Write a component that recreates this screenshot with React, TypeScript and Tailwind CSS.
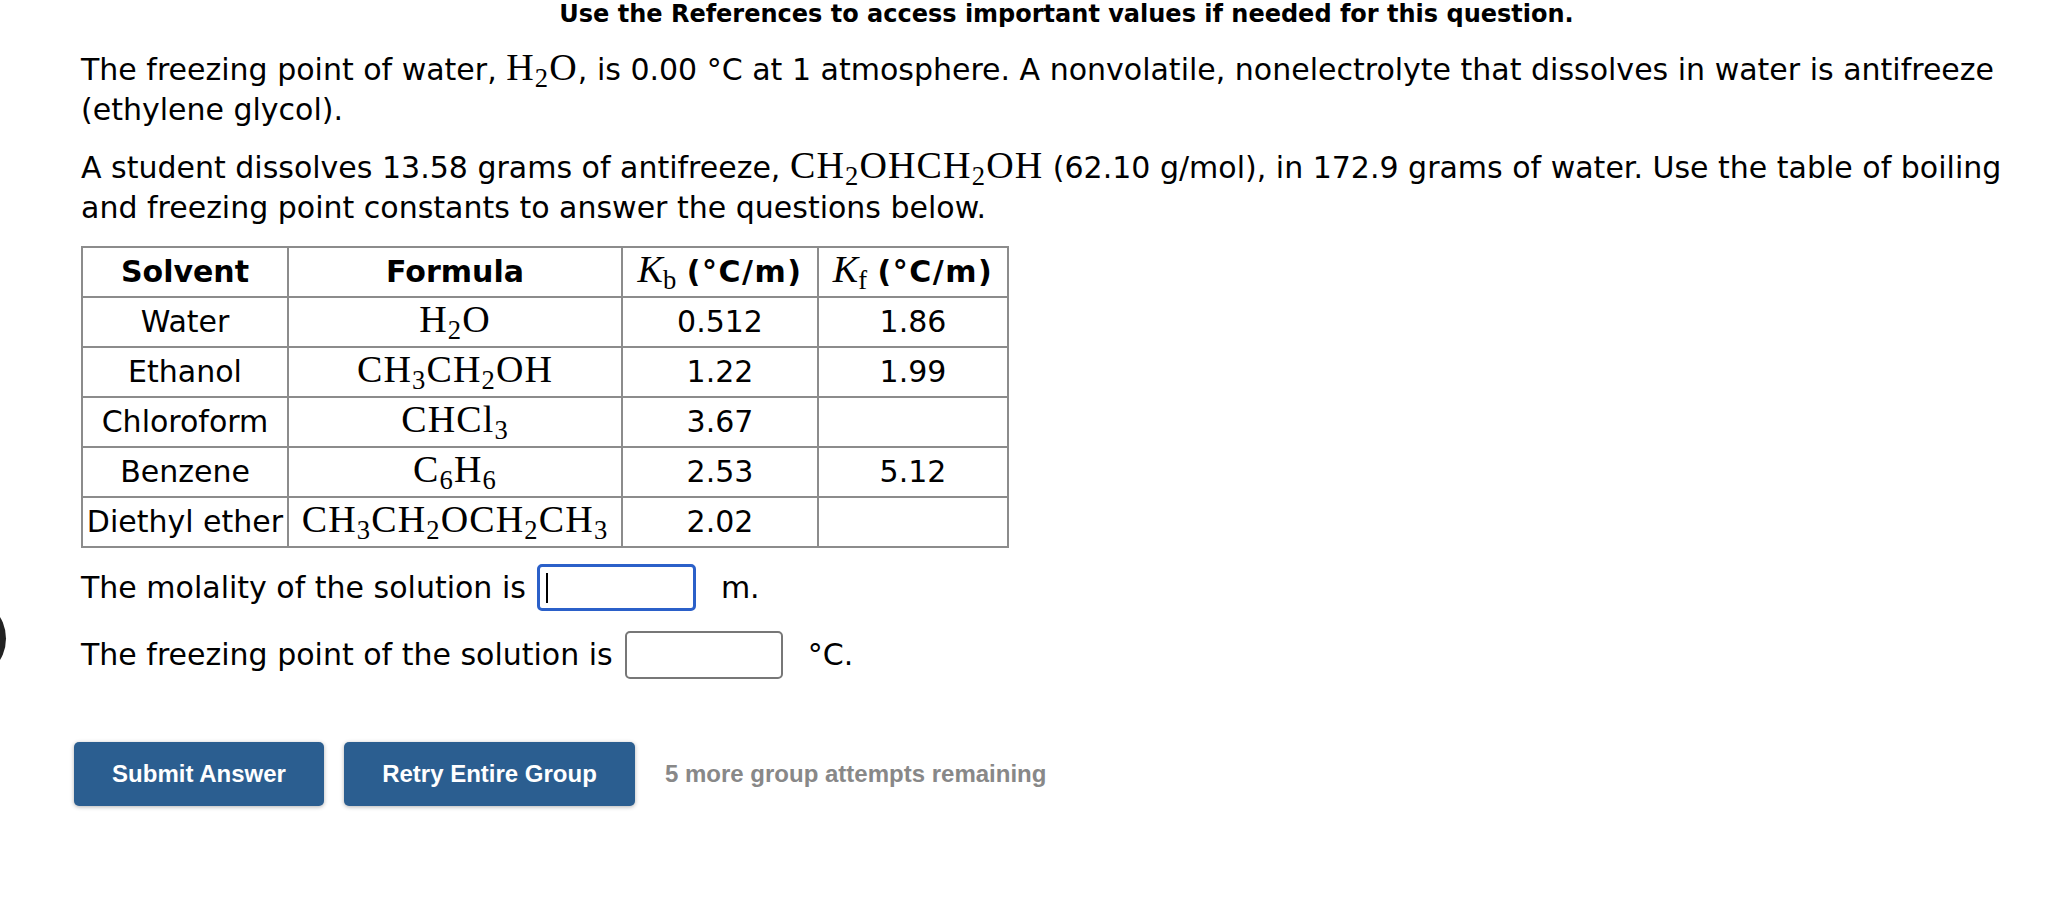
import React from 'react';

// Chemical formula in a math-like serif. "_3" marks a subscript digit.
function Chem({ f, className = '' }: { f: string; className?: string }) {
  const parts = f.split(/(_\w)/).filter(Boolean);
  return (
    <span className={`font-['Liberation_Serif',serif] text-[38px] font-normal leading-[0] tracking-[0.03em] ${className}`}>
      {parts.map((p, i) =>
        p.startsWith('_') ? (
          <span key={i} className="relative top-[0.25em] text-[0.7em]">
            {p.slice(1)}
          </span>
        ) : (
          <span key={i}>{p}</span>
        )
      )}
    </span>
  );
}

function KConst({ sub }: { sub: string }) {
  return (
    <>
      <span className="font-['Liberation_Serif',serif] text-[38px] font-normal leading-[0]">
        <span className="italic">K</span>
        <span className="relative top-[0.25em] text-[0.7em]">{sub}</span>
      </span>{' '}
      <span className="tracking-[0.05em]">(°C/m)</span>
    </>
  );
}

const rows = [
  { solvent: 'Water', formula: 'H_2O', kb: '0.512', kf: '1.86' },
  { solvent: 'Ethanol', formula: 'CH_3CH_2OH', kb: '1.22', kf: '1.99' },
  { solvent: 'Chloroform', formula: 'CHCl_3', kb: '3.67', kf: '' },
  { solvent: 'Benzene', formula: 'C_6H_6', kb: '2.53', kf: '5.12' },
  { solvent: 'Diethyl ether', formula: 'CH_3CH_2OCH_2CH_3', kb: '2.02', kf: '' },
];

const cell = 'border-2 border-[#8c8c8c] text-center align-middle p-0 whitespace-nowrap';

function AnswerBox({ focused }: { focused?: boolean }) {
  return (
    <div
      className={
        focused
          ? 'ml-[11px] flex h-[47px] w-[159px] items-center rounded-[5px] border-[3px] border-[#2b60c9] pl-[6px]'
          : 'ml-[12px] h-[48px] w-[158px] rounded-[5px] border-2 border-[#777]'
      }
    >
      {focused && <div className="h-[30px] w-[2px] bg-black" />}
    </div>
  );
}

export default function App() {
  return (
    <div className="relative min-h-[918px] w-full overflow-hidden bg-white pl-[81px] pr-[20px] pt-[2px] font-['DejaVu_Sans',Verdana,sans-serif] text-black">
      {/* dark tab peeking in from the left edge */}
      <div className="absolute left-[-77px] top-[597px] h-[83px] w-[83px] rounded-full bg-[#222]" />

      <div className="text-center text-[24px] font-bold leading-[24px]">
        Use the References to access important values if needed for this question.
      </div>

      <p className="mt-[24px] text-[30px] leading-[40px]">
        The freezing point of water, <Chem f="H_2O" />, is 0.00 °C at 1 atmosphere. A nonvolatile,
        nonelectrolyte that dissolves in water is antifreeze (ethylene glycol).
      </p>

      <p className="mt-[18px] text-[30px] leading-[40px]">
        A student dissolves 13.58 grams of antifreeze, <Chem f="CH_2OHCH_2OH" /> (62.10 g/mol), in 172.9
        grams of water. Use the table of boiling and freezing point constants to answer the questions below.
      </p>

      <table className="mt-[18px] table-fixed border-collapse text-[30px] leading-[40px]">
        <colgroup>
          <col className="w-[206px]" />
          <col className="w-[334px]" />
          <col className="w-[196px]" />
          <col className="w-[190px]" />
        </colgroup>
        <thead>
          <tr className="h-[50px] font-bold">
            <th className={cell}>Solvent</th>
            <th className={cell}>Formula</th>
            <th className={cell}>
              <KConst sub="b" />
            </th>
            <th className={cell}>
              <KConst sub="f" />
            </th>
          </tr>
        </thead>
        <tbody>
          {rows.map(r => (
            <tr key={r.solvent} className="h-[50px]">
              <td className={cell}>{r.solvent}</td>
              <td className={cell}>
                <Chem f={r.formula} />
              </td>
              <td className={cell}>{r.kb}</td>
              <td className={cell}>{r.kf}</td>
            </tr>
          ))}
        </tbody>
      </table>

      <div className="mt-[16px] flex h-[47px] items-center text-[30px] leading-[40px]">
        <span>The molality of the solution is</span>
        <AnswerBox focused />
        <span className="ml-[25px]">m.</span>
      </div>

      <div className="mt-[20px] flex h-[48px] items-center text-[30px] leading-[40px]">
        <span>The freezing point of the solution is</span>
        <AnswerBox />
        <span className="ml-[25px]">°C.</span>
      </div>

      <div className="ml-[-7px] mt-[63px] flex items-center font-['Liberation_Sans',Arial,sans-serif] text-[24px] font-bold">
        <button className="h-[64px] w-[250px] rounded-[5px] bg-[#2b5e90] text-white shadow-[0_1px_4px_rgba(0,0,0,0.3)]">
          Submit Answer
        </button>
        <button className="ml-[20px] h-[64px] w-[291px] rounded-[5px] bg-[#2b5e90] text-white shadow-[0_1px_4px_rgba(0,0,0,0.3)]">
          Retry Entire Group
        </button>
        <span className="ml-[30px] text-[#888]">5 more group attempts remaining</span>
      </div>
    </div>
  );
}
